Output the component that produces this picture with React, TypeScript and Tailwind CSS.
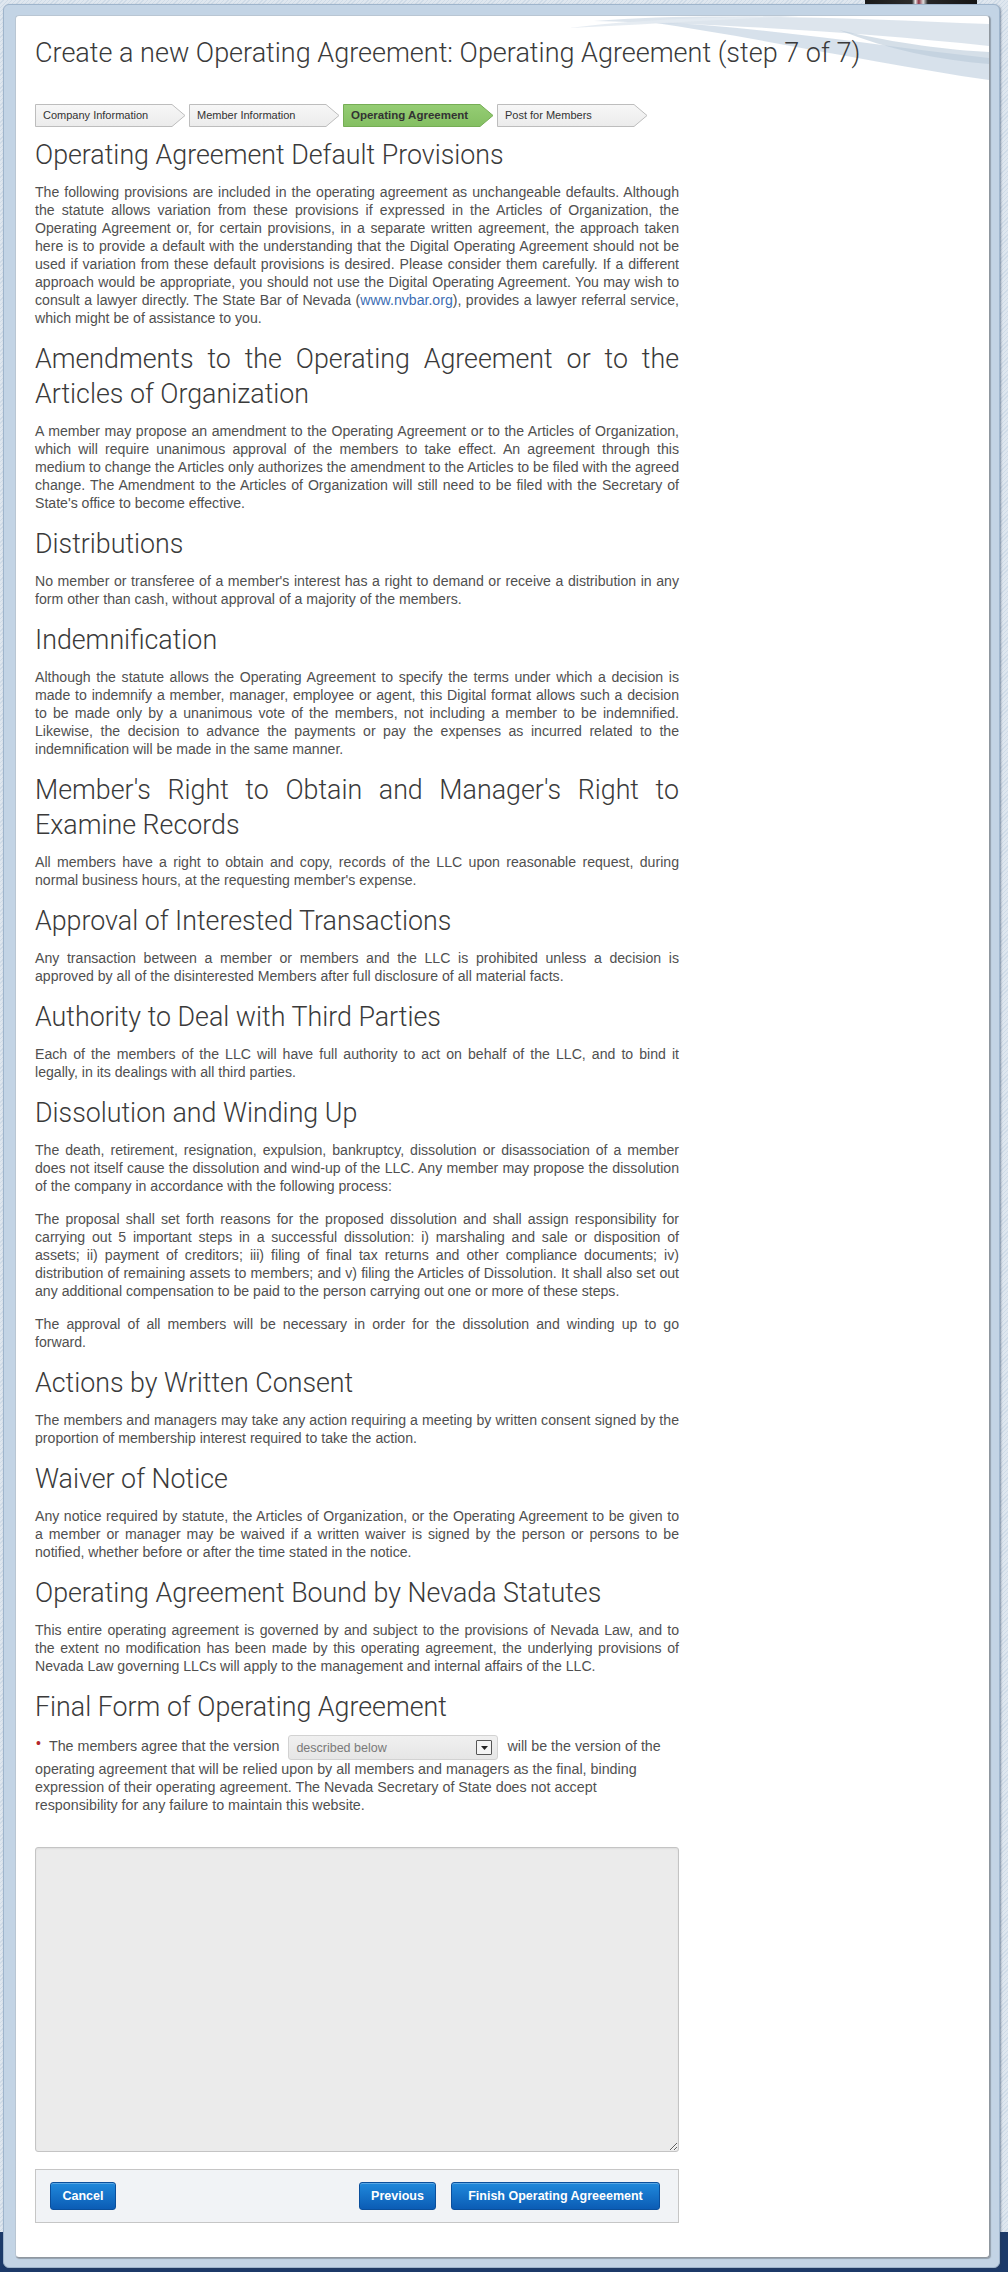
import React from "react";

const steps = [
    { label: "Company Information", active: false },
    { label: "Member Information", active: false },
    { label: "Operating Agreement", active: true },
    { label: "Post for Members", active: false },
];

const sections: { title: string; paras: string[] }[] = [
    {
        title: "Amendments to the Operating Agreement or to the Articles of Organization",
        paras: [
            "A member may propose an amendment to the Operating Agreement or to the Articles of Organization, which will require unanimous approval of the members to take effect. An agreement through this medium to change the Articles only authorizes the amendment to the Articles to be filed with the agreed change. The Amendment to the Articles of Organization will still need to be filed with the Secretary of State's office to become effective.",
        ],
    },
    {
        title: "Distributions",
        paras: [
            "No member or transferee of a member's interest has a right to demand or receive a distribution in any form other than cash, without approval of a majority of the members.",
        ],
    },
    {
        title: "Indemnification",
        paras: [
            "Although the statute allows the Operating Agreement to specify the terms under which a decision is made to indemnify a member, manager, employee or agent, this Digital format allows such a decision to be made only by a unanimous vote of the members, not including a member to be indemnified. Likewise, the decision to advance the payments or pay the expenses as incurred related to the indemnification will be made in the same manner.",
        ],
    },
    {
        title: "Member's Right to Obtain and Manager's Right to Examine Records",
        paras: [
            "All members have a right to obtain and copy, records of the LLC upon reasonable request, during normal business hours, at the requesting member's expense.",
        ],
    },
    {
        title: "Approval of Interested Transactions",
        paras: [
            "Any transaction between a member or members and the LLC is prohibited unless a decision is approved by all of the disinterested Members after full disclosure of all material facts.",
        ],
    },
    {
        title: "Authority to Deal with Third Parties",
        paras: [
            "Each of the members of the LLC will have full authority to act on behalf of the LLC, and to bind it legally, in its dealings with all third parties.",
        ],
    },
    {
        title: "Dissolution and Winding Up",
        paras: [
            "The death, retirement, resignation, expulsion, bankruptcy, dissolution or disassociation of a member does not itself cause the dissolution and wind-up of the LLC. Any member may propose the dissolution of the company in accordance with the following process:",
            "The proposal shall set forth reasons for the proposed dissolution and shall assign responsibility for carrying out 5 important steps in a successful dissolution: i) marshaling and sale or disposition of assets; ii) payment of creditors; iii) filing of final tax returns and other compliance documents; iv) distribution of remaining assets to members; and v) filing the Articles of Dissolution. It shall also set out any additional compensation to be paid to the person carrying out one or more of these steps.",
            "The approval of all members will be necessary in order for the dissolution and winding up to go forward.",
        ],
    },
    {
        title: "Actions by Written Consent",
        paras: [
            "The members and managers may take any action requiring a meeting by written consent signed by the proportion of membership interest required to take the action.",
        ],
    },
    {
        title: "Waiver of Notice",
        paras: [
            "Any notice required by statute, the Articles of Organization, or the Operating Agreement to be given to a member or manager may be waived if a written waiver is signed by the person or persons to be notified, whether before or after the time stated in the notice.",
        ],
    },
    {
        title: "Operating Agreement Bound by Nevada Statutes",
        paras: [
            "This entire operating agreement is governed by and subject to the provisions of Nevada Law, and to the extent no modification has been made by this operating agreement, the underlying provisions of Nevada Law governing LLCs will apply to the management and internal affairs of the LLC.",
        ],
    },
];

const headingCls =
    "text-[26.8px] leading-[35px] font-light text-[#3a3a3a] text-justify mb-[10px] [font-family:Roboto,'Liberation_Sans',sans-serif]";
const paraCls = "text-[14.12px] leading-[18px] text-[#505050] text-justify mb-[15px]";

const Step: React.FC<{ label: string; active: boolean }> = ({ label, active }) => (
    <div className="relative w-[151px] h-[23px]">
        <svg className="absolute inset-0" width="151" height="23" viewBox="0 0 151 23">
            <defs>
                <linearGradient id={active ? "stepOn" : "stepOff"} x1="0" y1="0" x2="0" y2="1">
                    <stop offset="0" stopColor={active ? "#95cd74" : "#f7f7f7"} />
                    <stop offset="1" stopColor={active ? "#84bf62" : "#ebebeb"} />
                </linearGradient>
            </defs>
            <polygon
                points="0.5,0.5 137,0.5 150,11.5 137,22.5 0.5,22.5"
                fill={`url(#${active ? "stepOn" : "stepOff"})`}
                stroke={active ? "#76ad55" : "#bdbdbd"}
                strokeWidth="1"
            />
        </svg>
        <span
            className={`relative block pl-2 leading-[23px] text-[#333] ${
                active ? "text-[11.5px] font-bold" : "text-[11px]"
            }`}
        >
            {label}
        </span>
    </div>
);

const BlueButton: React.FC<{ children: React.ReactNode; w: string }> = ({ children, w }) => (
    <button
        className={`${w} h-[28px] rounded-[3px] border border-[#0a4f9c] bg-[linear-gradient(to_bottom,#2089dc,#0b5cb5)] text-white text-[12.5px] font-bold text-center shadow-[inset_0_1px_0_rgba(255,255,255,0.25)]`}
    >
        {children}
    </button>
);

const App: React.FC = () => {
    return (
        <div className="relative min-h-[2272px] w-[1008px] pt-[4px] pl-[3px] [font-family:'Liberation_Sans',Arial,sans-serif] bg-[linear-gradient(to_bottom,transparent_2232px,#1c3a69_2232px),repeating-linear-gradient(135deg,#dfe7ef_0px,#dfe7ef_2px,#cfdbe7_2px,#cfdbe7_3px)]">
            {/* photo strip peeking above the frame */}
            <div className="absolute top-0 left-[865px] w-[112px] h-[5px] bg-[linear-gradient(to_right,#1a1a1a_0%,#2b2b2b_42%,#e8e8e8_45%,#8a3344_48%,#dcdcdc_52%,#262626_56%,#151515_100%)]" />

            <div className="relative w-[997px] pt-[10px] pl-[11px] pr-[9px] pb-[9px] rounded-[6px] border border-[#9fb5cc] bg-[#c3d4e5] shadow-[1px_1px_2px_rgba(40,60,90,0.5)]">
                <div className="relative overflow-hidden rounded-[4px] bg-white border border-[#b9c6d3] border-r-[#8f979f] border-b-[#8f979f] shadow-[1px_1px_1px_rgba(0,0,0,0.25)] pt-[20px] px-[19px] pb-[34px]">
                    {/* swoosh decoration */}
                    <svg
                        className="absolute top-0 right-0 pointer-events-none"
                        width="420"
                        height="110"
                        viewBox="0 0 420 110"
                    >
                        <path d="M 25 5 C 130 -4, 280 2, 420 8 L 420 30 C 290 16, 150 8, 25 5 Z" fill="#d5dfe9" opacity="0.8" />
                        <path d="M 80 6 C 190 10, 310 30, 420 42 L 420 64 C 310 48, 190 22, 80 6 Z" fill="#c6d4e2" opacity="0.7" />
                        <path d="M 270 14 C 330 28, 380 34, 420 36 L 420 48 C 370 44, 320 34, 270 14 Z" fill="#b9c9d9" opacity="0.6" />
                        <path d="M 0 12 C 60 4, 120 2, 200 0 L 230 0 C 150 4, 80 8, 0 12 Z" fill="#e3eaf1" opacity="0.9" />
                    </svg>

                    <div className="relative w-[644px]">
                        <h1 className="text-[27px] leading-[35px] font-light text-[#3a3a3a] whitespace-nowrap [font-family:Roboto,'Liberation_Sans',sans-serif]">
                            Create a new Operating Agreement: Operating Agreement (step 7 of 7)
                        </h1>

                        <div className="flex gap-[3px] mt-[33px] mb-[11px]">
                            {steps.map((s) => (
                                <Step key={s.label} label={s.label} active={s.active} />
                            ))}
                        </div>

                        <h2 className={headingCls}>Operating Agreement Default Provisions</h2>
                        <p className={paraCls}>
                            The following provisions are included in the operating agreement as unchangeable
                            defaults. Although the statute allows variation from these provisions if expressed in
                            the Articles of Organization, the Operating Agreement or, for certain provisions, in a
                            separate written agreement, the approach taken here is to provide a default with the
                            understanding that the Digital Operating Agreement should not be used if variation from
                            these default provisions is desired. Please consider them carefully. If a different
                            approach would be appropriate, you should not use the Digital Operating Agreement. You
                            may wish to consult a lawyer directly. The State Bar of Nevada (
                            <span className="text-[#3b6db3]">www.nvbar.org</span>), provides a lawyer referral
                            service, which might be of assistance to you.
                        </p>

                        {sections.map((sec) => (
                            <div key={sec.title}>
                                <h2 className={headingCls}>{sec.title}</h2>
                                {sec.paras.map((p, i) => (
                                    <p key={i} className={paraCls}>
                                        {p}
                                    </p>
                                ))}
                            </div>
                        ))}

                        <h2 className={headingCls}>Final Form of Operating Agreement</h2>
                        <p className="text-[14.3px] leading-[18px] text-[#505050] mb-[33px]">
                            <span className="text-[#b3272d] text-[14px] mr-[8px] ml-[1px] relative -top-[3px]">•</span>
                            The members agree that the version
                            <span className="inline-flex items-center align-middle mx-[9px] w-[210px] h-[25px] pl-[7px] pr-[5px] rounded-[3px] border border-[#d2d2d2] bg-[linear-gradient(to_bottom,#f0f0f0,#e6e6e6)] text-[12.5px] text-[#7a7a7a] justify-between">
                                described below
                                <span className="flex items-center justify-center w-[16px] h-[15px] border border-[#555] bg-[#f4f4f4] rounded-[1px]">
                                    <svg width="7" height="4" viewBox="0 0 7 4">
                                        <polygon points="0,0 7,0 3.5,4" fill="#222" />
                                    </svg>
                                </span>
                            </span>
                            will be the version of the operating agreement that will be relied upon by all members
                            and managers as the final, binding expression of their operating agreement. The Nevada
                            Secretary of State does not accept responsibility for any failure to maintain this
                            website.
                        </p>

                        <textarea
                            readOnly
                            className="block w-[644px] h-[305px] rounded-[3px] border border-[#c4c4c4] bg-[#ebebeb] shadow-[inset_0_1px_2px_rgba(0,0,0,0.06)] outline-none"
                        />

                        <div className="mt-[17px] flex items-center border border-[#c6c6c6] bg-[#f1f3f6] pl-[14px] pr-[18px] py-[12px]">
                            <BlueButton w="w-[66px]">Cancel</BlueButton>
                            <div className="ml-auto flex gap-[15px]">
                                <BlueButton w="w-[77px]">Previous</BlueButton>
                                <BlueButton w="w-[209px]">Finish Operating Agreeement</BlueButton>
                            </div>
                        </div>
                    </div>
                </div>
            </div>
        </div>
    );
};

export default App;
